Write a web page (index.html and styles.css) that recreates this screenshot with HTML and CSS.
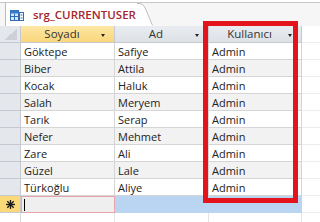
FILE: index.html
```html
<!DOCTYPE html>
<html lang="tr">
<head>
    <meta charset="UTF-8">
    <title>srg_CURRENTUSER</title>
    <link rel="stylesheet" href="styles.css">
</head>
<body>
<div class="window">

    <!-- Document tab -->
    <div class="tabstrip">
        <div class="tab">
            <svg class="tab-icon" width="14" height="11" viewBox="0 0 14 11">
                <rect x="0.5" y="0.5" width="8" height="10" fill="#d8e6f6" stroke="#2f6db5"/>
                <rect x="0.5" y="0.5" width="8" height="3" fill="#3a7bc8"/>
                <line x1="0.5" y1="6.5" x2="8.5" y2="6.5" stroke="#2f6db5"/>
                <line x1="4.5" y1="3.5" x2="4.5" y2="10.5" stroke="#2f6db5"/>
                <rect x="9.5" y="2.5" width="4" height="8" fill="#ffffff" stroke="#2f6db5"/>
                <line x1="10.5" y1="5" x2="12.5" y2="5" stroke="#2f6db5"/>
                <line x1="10.5" y1="8" x2="12.5" y2="8" stroke="#2f6db5"/>
            </svg>
            <span class="tab-title">srg_CURRENTUSER</span>
            <svg class="tab-curve" width="16" height="23" viewBox="0 0 16 23">
                <path d="M0 0 L2 0 C8 0 9 8 12 14 C14 19 15 22 16 23 L0 23 Z" fill="#ffffff"/>
                <path d="M0 0.5 L2 0.5 C8 0.5 9 8 12 14 C14 19 15 22 16 22.5" fill="none" stroke="#bcbcbc"/>
            </svg>
        </div>
    </div>

    <!-- Datasheet -->
    <div class="sheet">
        <div class="sel corner"><span class="corner-mark"></span></div>
        <div class="head active"><span class="label">Soyadı</span><span class="arrow"></span></div>
        <div class="head"><span class="label">Ad</span><span class="arrow"></span></div>
        <div class="head"><span class="label">Kullanıcı</span><span class="arrow"></span></div>
        <div class="filler head-fill"></div>

        <div class="sel"></div><div class="c">Göktepe</div><div class="c">Safiye</div><div class="c">Admin</div><div class="filler"></div>
        <div class="sel"></div><div class="c alt">Biber</div><div class="c alt">Attila</div><div class="c alt">Admin</div><div class="filler"></div>
        <div class="sel"></div><div class="c">Kocak</div><div class="c">Haluk</div><div class="c">Admin</div><div class="filler"></div>
        <div class="sel"></div><div class="c alt">Salah</div><div class="c alt">Meryem</div><div class="c alt">Admin</div><div class="filler"></div>
        <div class="sel"></div><div class="c">Tarık</div><div class="c">Serap</div><div class="c">Admin</div><div class="filler"></div>
        <div class="sel"></div><div class="c alt">Nefer</div><div class="c alt">Mehmet</div><div class="c alt">Admin</div><div class="filler"></div>
        <div class="sel"></div><div class="c">Zare</div><div class="c">Ali</div><div class="c">Admin</div><div class="filler"></div>
        <div class="sel"></div><div class="c alt">Güzel</div><div class="c alt">Lale</div><div class="c alt">Admin</div><div class="filler"></div>
        <div class="sel"></div><div class="c">Türkoğlu</div><div class="c">Aliye</div><div class="c">Admin</div><div class="filler"></div>

        <!-- new record row -->
        <div class="sel new-sel">
            <svg width="9" height="9" viewBox="0 0 9 9">
                <g stroke="#1a1a1a" stroke-width="1.3">
                    <line x1="4.5" y1="0" x2="4.5" y2="9"/>
                    <line x1="0" y1="4.5" x2="9" y2="4.5"/>
                    <line x1="1.3" y1="1.3" x2="7.7" y2="7.7"/>
                    <line x1="7.7" y1="1.3" x2="1.3" y2="7.7"/>
                </g>
            </svg>
        </div>
        <div class="c editing"><span class="caret"></span></div>
        <div class="c picked"></div>
        <div class="c picked"></div>
        <div class="filler"></div>

        <div class="blank sel-blank"></div><div class="blank"></div><div class="blank"></div><div class="blank"></div><div class="filler"></div>
    </div>

    <!-- highlight around the Kullanıcı column -->
    <div class="highlight"></div>
</div>
</body>
</html>
```

FILE: styles.css
```css
/* Access datasheet view */
body {
    margin: 0;
    background-color: #ffffff;
    font-family: "Open Sans", "Noto Sans", sans-serif;
    font-size: 11px;
    color: #222;
}

.window {
    position: relative;
    width: 320px;
    height: 222px;
    overflow: hidden;
}

/* tab strip */
.tabstrip {
    margin-top: 2px;
    height: 23px;
    border-top: 1px solid #c8c8c8;
    background-color: #f6f6f6;
    padding-left: 5px;
    display: flex;
    align-items: flex-end;
}

.tab {
    height: 23px;
    display: flex;
    align-items: center;
    background-color: #ffffff;
    border-left: 1px solid #bcbcbc;
    padding-left: 4px;
}

.tab-icon {
    margin-right: 9px;
    margin-top: 1px;
}

.tab-title {
    color: #a4262c;
    font-weight: 600;
    font-size: 11.5px;
    padding-right: 1px;
}

.tab-curve {
    align-self: flex-end;
    background-color: #f6f6f6;
}

/* grid */
.sheet {
    display: grid;
    grid-template-columns: 21px 94px 94px 93px 18px;
    grid-auto-rows: 17px;
}

.sheet > div {
    box-sizing: border-box;
}

.sel {
    background-color: #e4e7eb;
    border-right: 1px solid #c6cad0;
    border-bottom: 1px solid #c6cad0;
}

.corner {
    padding: 3px 3px 3px 4px;
}

.corner-mark {
    display: block;
    width: 13px;
    height: 11px;
    background: linear-gradient(to bottom right, transparent 50%, #cdd1d7 50%);
}

.head {
    display: flex;
    align-items: center;
    background: linear-gradient(#e9ecf0, #dde1e6);
    border-right: 1px solid #c6cad0;
    border-bottom: 1px solid #c6cad0;
    color: #333;
    font-size: 11.5px;
    line-height: 14px;
}

.head.active {
    background: linear-gradient(#fde7a6, #f9d67a);
}

.head .label {
    flex: 1;
    text-align: center;
    padding-left: 2px;
}

.head .arrow {
    width: 0;
    height: 0;
    border-left: 2.5px solid transparent;
    border-right: 2.5px solid transparent;
    border-top: 3px solid #222;
    margin: 2px 9px 0 0;
}

.head-fill {
    background-color: #f3f3f3;
    border-bottom: 1px solid #dadada;
}

.c {
    padding: 1px 3px 0;
    line-height: 15px;
    background-color: #ffffff;
    border-right: 1px solid #d5d5d5;
    border-bottom: 1px solid #d5d5d5;
    white-space: nowrap;
    overflow: hidden;
}

.c.alt {
    background-color: #f2f2f2;
}

.filler {
    background-color: #ffffff;
    border-bottom: 1px solid #ececec;
}

.new-sel {
    display: flex;
    align-items: center;
    justify-content: center;
    background-color: #fcd978;
}

.editing {
    background-color: #efefef;
    border: 1px solid #e6a4ac;
    padding: 2px 2px 0;
}

.caret {
    display: inline-block;
    width: 1px;
    height: 12px;
    background-color: #000;
}

.picked {
    background-color: #bad5f1;
    border-right-color: #bad5f1;
    border-bottom-color: #bad5f1;
}

.blank {
    background-color: #ffffff;
    border-right: 1px solid #e4e4e4;
}

.sel-blank {
    border-right: 1px solid #d8d8d8;
}

/* red annotation frame */
.highlight {
    position: absolute;
    left: 203px;
    top: 21px;
    width: 95px;
    height: 182px;
    box-sizing: border-box;
    border: 5px solid #e3141b;
}
```
